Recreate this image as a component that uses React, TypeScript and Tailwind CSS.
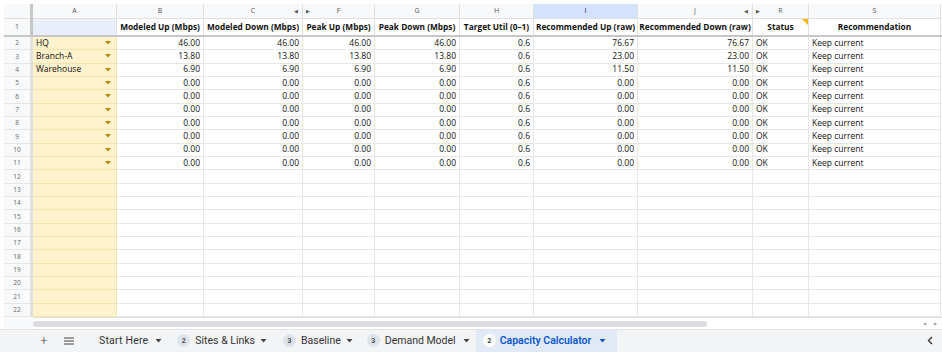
import React from "react";

const cols = [
  { k: "A", w: 84, h: "", align: "left" },
  { k: "B", w: 87, h: "Modeled Up (Mbps)", align: "right" },
  { k: "C", w: 99, h: "Modeled Down (Mbps)", align: "right" },
  { k: "F", w: 72, h: "Peak Up (Mbps)", align: "right" },
  { k: "G", w: 85, h: "Peak Down (Mbps)", align: "right" },
  { k: "H", w: 74, h: "Target Util (0–1)", align: "right" },
  { k: "I", w: 104, h: "Recommended Up (raw)", align: "right" },
  { k: "J", w: 115, h: "Recommended Down (raw)", align: "right" },
  { k: "R", w: 56, h: "Status", align: "left" },
  { k: "S", w: 132, h: "Recommendation", align: "left" },
];

const data: string[][] = [
  ["HQ", "46.00", "46.00", "46.00", "46.00", "0.6", "76.67", "76.67", "OK", "Keep current"],
  ["Branch-A", "13.80", "13.80", "13.80", "13.80", "0.6", "23.00", "23.00", "OK", "Keep current"],
  ["Warehouse", "6.90", "6.90", "6.90", "6.90", "0.6", "11.50", "11.50", "OK", "Keep current"],
];
for (let i = 0; i < 7; i++) data.push(["", "0.00", "0.00", "0.00", "0.00", "0.6", "0.00", "0.00", "OK", "Keep current"]);
for (let i = 0; i < 11; i++) data.push(["", "", "", "", "", "", "", "", "", ""]);

const font = { fontFamily: '"Open Sans", "Liberation Sans", sans-serif' };

function Caret({ color = "#b8860b" }: { color?: string }) {
  return (
    <svg width="6" height="4" viewBox="0 0 6 4" className="shrink-0">
      <path d="M0 0 L6 0 L3 3.5 Z" fill={color} />
    </svg>
  );
}

function Badge({ n, active }: { n: string; active?: boolean }) {
  return (
    <span
      className={`flex h-[13px] w-[13px] shrink-0 items-center justify-center rounded-full text-[7px] font-semibold ${
        active ? "bg-white text-[#333]" : "bg-[#dde3ea] text-[#444]"
      }`}
    >
      {n}
    </span>
  );
}

function TabCaret({ color = "#444" }: { color?: string }) {
  return (
    <svg width="7" height="4" viewBox="0 0 7 4" className="shrink-0">
      <path d="M0.5 0 L6.5 0 L3.5 3.5 Z" fill={color} />
    </svg>
  );
}

export default function App() {
  return (
    <div className="relative h-[352px] w-[942px] overflow-hidden bg-white text-[#111]" style={font}>
      {/* column headers */}
      <div className="mt-[4px] flex h-[15px]">
        <div className="ml-[4px] h-full w-[26px] border-b border-[#e0e0e0] bg-[#f8f9fa]" />
        <div className="h-full w-[3px] bg-[#c4c7c5]" />
        {cols.map((c) => (
          <div
            key={c.k}
            className={`relative flex h-full shrink-0 items-center justify-center border-b border-r border-[#e0e0e0] text-[7px] ${
              c.k === "I" ? "bg-[#d3e3fd] text-[#0b1f44]" : "bg-[#f8f9fa] text-[#555]"
            }`}
            style={{ width: c.w }}
          >
            {c.k}
            {(c.k === "C" || c.k === "J") && (
              <span className="absolute right-[4px] top-[4px] text-[5px] text-[#555]">◀</span>
            )}
            {(c.k === "F" || c.k === "R") && (
              <span className="absolute left-[3px] top-[4px] text-[5px] text-[#555]">▶</span>
            )}
          </div>
        ))}
      </div>
      {/* row 1 */}
      <div className="flex h-[16px]">
        <div className="ml-[4px] flex h-full w-[26px] items-center justify-center bg-[#f8f9fa] text-[7px] text-[#555]">1</div>
        <div className="h-full w-[3px] bg-[#c4c7c5]" />
        {cols.map((c) => (
          <div
            key={c.k}
            className={`relative flex h-full shrink-0 items-center justify-center whitespace-nowrap border-r border-[#e0e0e0] text-[8.3px] font-bold ${
              c.k === "A" ? "bg-[#e8eefa]" : "bg-white"
            }`}
            style={{ width: c.w }}
          >
            {c.h}
            {c.k === "R" && (
              <span className="absolute right-0 top-0 h-0 w-0 border-l-[6px] border-t-[6px] border-l-transparent border-t-[#f4b400]" />
            )}
          </div>
        ))}
      </div>
      <div className="ml-[4px] h-[2px] bg-[#c4c7c5]" />
      {/* data rows */}
      {data.map((r, i) => (
        <div key={i} className="flex h-[13.33px]">
          <div className="ml-[4px] flex h-full w-[26px] items-center justify-center border-b border-[#e6e6e6] bg-[#f8f9fa] text-[6.5px] text-[#666]">
            {i + 2}
          </div>
          <div className="h-full w-[3px] bg-[#e0e0e0]" />
          {cols.map((c, j) => (
            <div
              key={c.k}
              className={`flex h-full shrink-0 items-center whitespace-nowrap border-r border-b text-[8.5px] ${
                j === 0 ? "border-[#f3e3b0] bg-[#fff2cc] pl-[3px] pr-[5px] justify-between" : "border-[#e6e6e6] bg-white px-[3px]"
              } ${c.align === "right" ? "justify-end" : ""}`}
              style={{ width: c.w }}
            >
              {j === 0 ? (
                <>
                  <span>{r[0]}</span>
                  {i < 10 && <Caret />}
                </>
              ) : (
                r[j]
              )}
            </div>
          ))}
        </div>
      ))}
      {/* scrollbar area */}
      <div className="flex h-[12px] items-center">
        <div className="ml-[4px] h-full w-[29px] bg-[#f8f9fa]" />
        <div className="relative h-full flex-1 border-t border-[#e0e0e0] bg-white">
          <div className="absolute left-0 top-[3px] h-[6px] w-[674px] rounded-full bg-[#dadce0]" />
          <div className="absolute right-[14px] top-[2px] flex h-[8px] w-[8px] items-center justify-center text-[4px] text-[#999]">◀</div>
          <div className="absolute right-[3px] top-[2px] flex h-[8px] w-[8px] items-center justify-center text-[4px] text-[#999]">▶</div>
        </div>
      </div>
      {/* tabs */}
      <div
        className="flex h-[23px] items-stretch border-t border-[#e3e3e3] bg-[#f3f4f6] text-[10.5px] text-[#333]"
        style={{ fontFamily: 'Roboto, "Open Sans", sans-serif' }}
      >
        <div className="ml-[38px] flex w-[12px] items-center justify-center text-[13px] font-light text-[#444]">+</div>
        <div className="ml-[14px] flex items-center">
          <svg width="10" height="8" viewBox="0 0 10 8">
            <path d="M0 1h10M0 4h10M0 7h10" stroke="#444" strokeWidth="1" />
          </svg>
        </div>
        <div className="ml-[25px] flex items-center gap-[7px] tracking-[0.2px]">
          <span>Start Here</span>
          <TabCaret />
        </div>
        <div className="ml-[15px] flex items-center gap-[5px]">
          <Badge n="2" />
          <span>Sites &amp; Links</span>
          <TabCaret />
        </div>
        <div className="ml-[16px] flex items-center gap-[5px]">
          <Badge n="3" />
          <span>Baseline</span>
          <TabCaret />
        </div>
        <div className="ml-[14px] flex items-center gap-[5px]">
          <Badge n="3" />
          <span>Demand Model</span>
          <span className="ml-[2px]">
            <TabCaret />
          </span>
        </div>
        <div className="ml-[6px] flex w-[141px] items-center bg-[#e1e9f7] pl-[7px] text-[10.5px] font-semibold text-[#0b57d0]">
          <Badge n="2" active />
          <span className="ml-[4px]">Capacity Calculator</span>
          <span className="ml-[8px]">
            <TabCaret color="#0b57d0" />
          </span>
        </div>
        <div className="ml-auto mr-[9px] flex items-center">
          <svg width="6" height="9" viewBox="0 0 6 9">
            <path d="M5 1 L1.5 4.5 L5 8" stroke="#333" strokeWidth="1.4" fill="none" />
          </svg>
        </div>
      </div>
    </div>
  );
}
